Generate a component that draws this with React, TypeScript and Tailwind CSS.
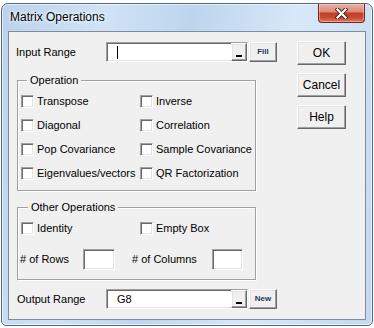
import React from "react";

const sunken =
  "border border-t-[#a0a0a0] border-l-[#a0a0a0] border-b-white border-r-white shadow-[inset_1px_1px_0_#696969,inset_-1px_-1px_0_#e3e3e3] bg-white";
const raised =
  "border border-t-white border-l-white border-b-[#696969] border-r-[#696969] shadow-[inset_-1px_-1px_0_#a0a0a0,inset_1px_1px_0_#e3e3e3] bg-[#f0f0f0]";

function Check({ label }: { label: string }) {
  return (
    <div className="flex items-center h-[13px]">
      <div className={`w-[13px] h-[13px] shrink-0 ${sunken} bg-[#fbfbfb]`} />
      <span className="ml-[3px] text-[11px] leading-none text-black whitespace-nowrap">{label}</span>
    </div>
  );
}

function RefEdit({ value, cursor }: { value?: string; cursor?: boolean }) {
  return (
    <div className={`w-[142px] h-[20px] flex items-stretch ${sunken}`}>
      <div className="flex-1 flex items-center pl-[10px] text-[11px] text-black">
        {cursor ? <div className="w-[1px] h-[13px] bg-black" /> : value}
      </div>
      <div className={`w-[16px] ${raised} flex items-end justify-center pb-[3px]`}>
        <div className="w-[6px] h-[2px] bg-black" />
      </div>
    </div>
  );
}

function SmallBtn({ label }: { label: string }) {
  return (
    <div
      className={`ml-[1px] w-[28px] h-[20px] ${raised} flex items-center justify-center text-[8px] font-bold text-[#26355a] leading-none`}
    >
      {label}
    </div>
  );
}

function BigBtn({ label }: { label: string }) {
  return (
    <div className={`w-[49px] h-[24px] ${raised} flex items-center justify-center text-[12px] text-black`}>
      {label}
    </div>
  );
}

export default function App() {
  return (
    <div
      className="w-[374px] h-[328px] overflow-hidden bg-white pt-[3px] pl-[1px]"
      style={{ fontFamily: '"Liberation Sans", Arial, sans-serif' }}
    >
      <div className="w-[372px] h-[323px] rounded-t-[7px] rounded-b-[5px] border border-[#56687c] bg-[linear-gradient(100deg,#bad2ec_0%,#d0e3f6_25%,#bcd5ee_45%,#d8e8f8_70%,#c3d9f0_100%)] flex flex-col px-[6px] pb-[5px] shadow-[inset_0_0_0_1px_rgba(255,255,255,0.6)]">
        {/* title bar */}
        <div className="h-[27px] flex items-start -mx-[6px] shrink-0">
          <div className="pl-[8px] pt-[6px] text-[12px] text-black leading-[14px] [text-shadow:0_0_5px_#ffffff,0_0_3px_#ffffff]">
            Matrix Operations
          </div>
          <div className="ml-auto mr-[7px] w-[47px] h-[19px] rounded-b-[4px] border border-t-0 border-[#6b2a1f] bg-[linear-gradient(180deg,#ecb0a2_0%,#dd8a77_42%,#c43e26_52%,#c9492f_75%,#dc7a61_100%)] shadow-[inset_0_0_0_1px_rgba(255,220,210,0.45)] flex items-center justify-center">
            <svg width="13" height="11" viewBox="0 0 13 11">
              <path d="M2.5 1.5 L10.5 9.5 M10.5 1.5 L2.5 9.5" stroke="#3d1d18" strokeWidth="4" strokeLinecap="square" />
              <path d="M2.5 1.5 L10.5 9.5 M10.5 1.5 L2.5 9.5" stroke="#ffffff" strokeWidth="2.2" strokeLinecap="square" />
            </svg>
          </div>
        </div>

        {/* client area */}
        <div className="flex-1 border border-[#7f8c9b] bg-[#f0f0f0] flex pl-[7px]">
          {/* left column */}
          <div className="w-[261px] flex flex-col">
            <div className="mt-[10px] flex items-center h-[20px]">
              <div className="w-[90px] text-[11px] text-black">Input Range</div>
              <RefEdit cursor />
              <SmallBtn label="Fill" />
            </div>

            {/* Operation group */}
            <div className="relative ml-[1px] mt-[18px] w-[239px] h-[111px] border border-[#a0a0a0] shadow-[inset_1px_1px_0_#ffffff,1px_1px_0_#ffffff] pl-[3px] pt-[14px]">
              <span className="absolute left-[9px] top-[-8px] px-[3px] bg-[#f0f0f0] text-[11px] leading-[14px] text-black">
                Operation
              </span>
              <div className="grid grid-cols-[119px_1fr] gap-y-[11px]">
                <Check label="Transpose" />
                <Check label="Inverse" />
                <Check label="Diagonal" />
                <Check label="Correlation" />
                <Check label="Pop Covariance" />
                <Check label="Sample Covariance" />
                <Check label="Eigenvalues/vectors" />
                <Check label="QR Factorization" />
              </div>
            </div>

            {/* Other Operations group */}
            <div className="relative ml-[1px] mt-[16px] w-[239px] h-[73px] border border-[#a0a0a0] shadow-[inset_1px_1px_0_#ffffff,1px_1px_0_#ffffff] pt-[14px]">
              <span className="absolute left-[10px] top-[-8px] px-[3px] bg-[#f0f0f0] text-[11px] leading-[14px] text-black">
                Other Operations
              </span>
              <div className="pl-[3px] grid grid-cols-[119px_1fr]">
                <Check label="Identity" />
                <Check label="Empty Box" />
              </div>
              <div className="mt-[14px] flex items-center pl-[2px]">
                <div className="w-[63px] text-[11px] text-black">&#35; of Rows</div>
                <div className={`w-[32px] h-[21px] ${sunken}`} />
                <div className="ml-[17px] w-[80px] text-[11px] text-black">&#35; of Columns</div>
                <div className={`w-[31px] h-[21px] ${sunken}`} />
              </div>
            </div>

            <div className="mt-[9px] flex items-center h-[20px] pl-[1px]">
              <div className="w-[89px] text-[11px] text-black">Output Range</div>
              <RefEdit value="G8" />
              <SmallBtn label="New" />
            </div>
          </div>

          {/* right column buttons */}
          <div className="ml-[20px] pt-[9px] flex flex-col gap-[8px]">
            <BigBtn label="OK" />
            <BigBtn label="Cancel" />
            <BigBtn label="Help" />
          </div>
        </div>
      </div>
    </div>
  );
}
